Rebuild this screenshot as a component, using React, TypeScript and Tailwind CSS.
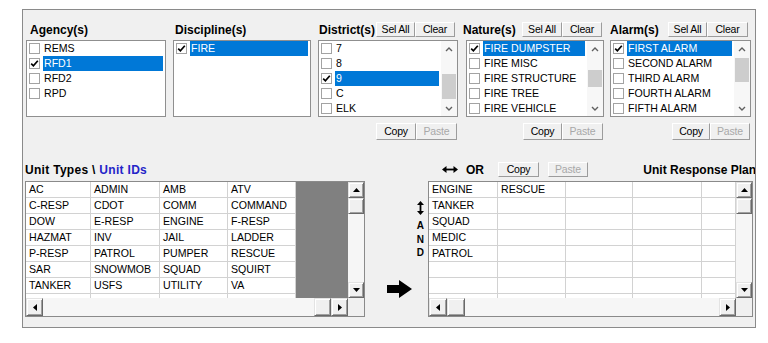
import React from 'react';

// ── small drawings ────────────────────────────

const Tick = () => (
  <svg width="9" height="9" viewBox="0 0 9 9" fill="none">
    <path d="M1.2 4.6L3.4 6.8L7.8 1.8" stroke="#000" strokeWidth="1.7" />
  </svg>
);

const ChevUp = () => (
  <svg width="8" height="5" viewBox="0 0 8 5" fill="none">
    <path d="M1 4L4 1L7 4" stroke="#606060" strokeWidth="1.4" />
  </svg>
);
const ChevDown = () => (
  <svg width="8" height="5" viewBox="0 0 8 5" fill="none">
    <path d="M1 1L4 4L7 1" stroke="#606060" strokeWidth="1.4" />
  </svg>
);

const TriUp = () => (
  <svg width="7" height="4" viewBox="0 0 7 4"><path d="M0 4L3.5 0L7 4Z" fill="#000" /></svg>
);
const TriDown = () => (
  <svg width="7" height="4" viewBox="0 0 7 4"><path d="M0 0L3.5 4L7 0Z" fill="#000" /></svg>
);
const TriLeft = () => (
  <svg width="4" height="7" viewBox="0 0 4 7"><path d="M4 0L0 3.5L4 7Z" fill="#000" /></svg>
);
const TriRight = () => (
  <svg width="4" height="7" viewBox="0 0 4 7"><path d="M0 0L4 3.5L0 7Z" fill="#000" /></svg>
);

const BigArrow = () => (
  <svg width="25" height="18" viewBox="0 0 25 18">
    <path d="M0 5H12V0L25 9L12 18V13H0Z" fill="#000" />
  </svg>
);

const ArrowUpDown = () => (
  <svg width="7" height="14" viewBox="0 0 7 14">
    <path d="M3.5 0L7 4H0Z M3.5 14L7 10H0Z" fill="#000" />
    <rect x="2.6" y="3" width="1.8" height="8" fill="#000" />
  </svg>
);

const ArrowLeftRight = () => (
  <svg width="16" height="7" viewBox="0 0 16 7">
    <path d="M0 3.5L4.5 0V7Z M16 3.5L11.5 0V7Z" fill="#000" />
    <rect x="4" y="2.6" width="8" height="1.8" fill="#000" />
  </svg>
);

// ── check list box ────────────────────────────

interface ListProps {
  items: string[];
  sel: number;
  className: string;
  thumb?: [number, number];
}

const CheckList: React.FC<ListProps> = ({ items, sel, className, thumb }) => (
  <div className={`h-[77px] border border-[#8f8f8f] bg-white flex ${className}`}>
    <div className="flex-1 flex flex-col min-w-0">
      {items.map((it, i) => (
        <div key={it} className="h-[15px] flex items-center pl-[2px]">
          <span className="w-[11px] h-[11px] border border-[#a3a3a3] bg-white flex items-center justify-center shrink-0">
            {i === sel && <Tick />}
          </span>
          <span
            className={
              i === sel
                ? 'ml-[3px] flex-1 h-full bg-[#0078d7] text-white pl-[1px] leading-[15px] whitespace-nowrap mr-[2px]'
                : 'ml-[3px] flex-1 h-full pl-[1px] leading-[15px] whitespace-nowrap'
            }
          >
            {it}
          </span>
        </div>
      ))}
    </div>
    {thumb && (
      <div className="w-[16px] flex flex-col bg-[#f7f7f7]">
        <div className="h-[16px] flex items-center justify-center"><ChevUp /></div>
        <div className="flex-1 flex flex-col">
          <div style={{ height: thumb[0] }} />
          <div className="bg-[#cdcdcd] mx-[1px]" style={{ height: thumb[1] }} />
        </div>
        <div className="h-[16px] flex items-center justify-center"><ChevDown /></div>
      </div>
    )}
  </div>
);

// ── buttons ───────────────────────────────────

const Btn: React.FC<{ label: string; className: string; off?: boolean }> = ({ label, className, off }) => (
  <div
    className={`border border-t-white border-l-white border-r-[#9c9c9c] border-b-[#9c9c9c] bg-[#f0f0f0] text-[10.5px] tracking-[-0.2px] flex items-center justify-center leading-none ${
      off ? 'text-[#a8a8a8]' : 'text-black'
    } ${className}`}
  >
    {label}
  </div>
);

const ClassicBtn: React.FC<{ className: string; children?: React.ReactNode }> = ({ className, children }) => (
  <div
    className={`bg-[#f0f0f0] border border-t-[#e3e3e3] border-l-[#e3e3e3] border-r-[#696969] border-b-[#696969] shadow-[inset_1px_1px_0_#ffffff,inset_-1px_-1px_0_#a0a0a0] flex items-center justify-center shrink-0 ${className}`}
  >
    {children}
  </div>
);

// ── data ──────────────────────────────────────

const UNIT_TYPES = [
  ['AC', 'ADMIN', 'AMB', 'ATV'],
  ['C-RESP', 'CDOT', 'COMM', 'COMMAND'],
  ['DOW', 'E-RESP', 'ENGINE', 'F-RESP'],
  ['HAZMAT', 'INV', 'JAIL', 'LADDER'],
  ['P-RESP', 'PATROL', 'PUMPER', 'RESCUE'],
  ['SAR', 'SNOWMOB', 'SQUAD', 'SQUIRT'],
  ['TANKER', 'USFS', 'UTILITY', 'VA'],
  ['', '', '', ''],
];

const PLAN = [
  ['ENGINE', 'RESCUE', '', '', ''],
  ['TANKER', '', '', '', ''],
  ['SQUAD', '', '', '', ''],
  ['MEDIC', '', '', '', ''],
  ['PATROL', '', '', '', ''],
  ['', '', '', '', ''],
  ['', '', '', '', ''],
  ['', '', '', '', ''],
];

const LEFT_COLS = ['w-[65px]', 'w-[69px]', 'w-[68px]', 'w-[68px]'];
const RIGHT_COLS = ['w-[69px]', 'w-[68px]', 'w-[67px]', 'w-[69px]', 'w-[34px]'];

const VScroll = () => (
  <div className="w-[16px] flex flex-col bg-[#f6f6f6]">
    <ClassicBtn className="h-[16px] w-[16px]"><TriUp /></ClassicBtn>
    <ClassicBtn className="h-[16px] w-[16px]" />
    <div className="flex-1" />
    <ClassicBtn className="h-[16px] w-[16px]"><TriDown /></ClassicBtn>
  </div>
);

const Cells: React.FC<{ rows: string[][]; cols: string[] }> = ({ rows, cols }) => (
  <div className="flex flex-col overflow-hidden">
    {rows.map((r, i) => (
      <div key={i} className="flex h-[16px] shrink-0 border-b border-[#d2d2d2]">
        {r.map((c, j) => (
          <div
            key={j}
            className={`${cols[j]} h-full shrink-0 border-r border-[#d2d2d2] pl-[3px] leading-[15px] whitespace-nowrap overflow-hidden`}
          >
            {c}
          </div>
        ))}
      </div>
    ))}
  </div>
);

// ── page ──────────────────────────────────────

export default function App() {
  return (
    <div className="w-[768px] h-[343px] bg-white pl-[22px] pt-[9px] font-['Liberation_Sans',Arial,sans-serif] text-black text-[10.6px]">
      <div className="w-[734px] h-[319px] border border-[#8a8a8a] bg-[#f0f0f0] flex flex-col overflow-hidden">

        {/* ── top: filter lists ── */}
        <div className="flex pl-[3px] pt-[12px] gap-[7px]">
          {/* Agency */}
          <div className="w-[140px] flex flex-col">
            <div className="h-[15px] flex items-center pl-[4px] font-bold text-[12px]">Agency(s)</div>
            <CheckList className="mt-[3px]" items={['REMS', 'RFD1', 'RFD2', 'RPD']} sel={1} />
          </div>

          {/* Discipline */}
          <div className="w-[138px] flex flex-col">
            <div className="h-[15px] flex items-center pl-[2px] font-bold text-[12px]">Discipline(s)</div>
            <CheckList className="mt-[3px]" items={['FIRE']} sel={0} />
          </div>

          {/* District */}
          <div className="w-[140px] flex flex-col">
            <div className="h-[15px] flex items-center pl-[1px]">
              <span className="font-bold text-[12px]">District(s)</span>
              <div className="ml-auto mr-[3px] flex">
                <Btn label="Sel All" className="w-[39px] h-[15px]" />
                <Btn label="Clear" className="w-[40px] h-[15px]" />
              </div>
            </div>
            <CheckList className="mt-[3px]" items={['7', '8', '9', 'C', 'ELK']} sel={2} thumb={[17, 25]} />
            <div className="mt-[6px] h-[17px] flex justify-end mr-[1px]">
              <Btn label="Copy" className="w-[40px] h-[17px]" />
              <Btn label="Paste" off className="w-[41px] h-[17px]" />
            </div>
          </div>

          {/* Nature */}
          <div className="w-[138px] flex flex-col ml-[1px]">
            <div className="h-[15px] flex items-center -ml-[3px]">
              <span className="font-bold text-[12px]">Nature(s)</span>
              <div className="ml-auto mr-[2px] flex">
                <Btn label="Sel All" className="w-[40px] h-[15px]" />
                <Btn label="Clear" className="w-[40px] h-[15px]" />
              </div>
            </div>
            <CheckList
              className="mt-[3px]"
              items={['FIRE DUMPSTER', 'FIRE MISC', 'FIRE STRUCTURE', 'FIRE TREE', 'FIRE VEHICLE']}
              sel={0}
              thumb={[13, 17]}
            />
            <div className="mt-[6px] h-[17px] flex justify-end mr-[1px]">
              <Btn label="Copy" className="w-[39px] h-[17px]" />
              <Btn label="Paste" off className="w-[41px] h-[17px]" />
            </div>
          </div>

          {/* Alarm */}
          <div className="w-[141px] flex flex-col -ml-[1px]">
            <div className="h-[15px] flex items-center">
              <span className="font-bold text-[12px]">Alarm(s)</span>
              <div className="ml-auto mr-[3px] flex">
                <Btn label="Sel All" className="w-[39px] h-[15px]" />
                <Btn label="Clear" className="w-[41px] h-[15px]" />
              </div>
            </div>
            <CheckList
              className="mt-[3px]"
              items={['FIRST ALARM', 'SECOND ALARM', 'THIRD ALARM', 'FOURTH ALARM', 'FIFTH ALARM']}
              sel={0}
              thumb={[1, 24]}
            />
            <div className="mt-[6px] h-[17px] flex justify-end mr-[1px]">
              <Btn label="Copy" className="w-[38px] h-[17px]" />
              <Btn label="Paste" off className="w-[40px] h-[17px]" />
            </div>
          </div>
        </div>

        {/* ── bottom: unit types → response plan ── */}
        <div className="flex pl-[2px] mt-[22px]">
          {/* Unit types grid */}
          <div className="w-[340px] flex flex-col">
            <div className="h-[15px] flex items-center font-bold text-[12px] tracking-[0.3px]">
              Unit Types \&nbsp;<span className="text-[#2424c8]">Unit IDs</span>
            </div>
            <div className="mt-[4px] h-[136px] border border-[#8a8a8a] bg-white flex flex-col">
              <div className="flex h-[116px]">
                <div className="w-[270px] h-full overflow-hidden">
                  <Cells rows={UNIT_TYPES} cols={LEFT_COLS} />
                </div>
                <div className="w-[52px] h-full bg-[#808080]" />
                <VScroll />
              </div>
              <div className="flex h-[18px]">
                <div className="w-[322px] flex bg-[#f6f6f6]">
                  <ClassicBtn className="w-[17px] h-[18px]"><TriLeft /></ClassicBtn>
                  <div className="flex-1" />
                  <ClassicBtn className="w-[17px] h-[18px]" />
                  <ClassicBtn className="w-[17px] h-[18px]"><TriRight /></ClassicBtn>
                </div>
                <div className="w-[16px] bg-[#f0f0f0]" />
              </div>
            </div>
          </div>

          {/* middle: AND + arrow */}
          <div className="w-[63px] flex">
            <div className="pl-[22px] pt-[118px]">
              <BigArrow />
            </div>
            <div className="ml-auto mr-[4px] pt-[39px] flex flex-col items-center">
              <ArrowUpDown />
              <div className="mt-[4px] flex flex-col items-center font-bold text-[10px] leading-[13.5px]">
                <span>A</span>
                <span>N</span>
                <span>D</span>
              </div>
            </div>
          </div>

          {/* Response plan grid */}
          <div className="w-[325px] flex flex-col">
            <div className="h-[15px] flex items-center">
              <div className="ml-[14px] flex items-center">
                <ArrowLeftRight />
                <span className="ml-[8px] font-bold text-[12px]">OR</span>
              </div>
              <Btn label="Copy" className="ml-[14px] w-[41px] h-[15px]" />
              <Btn label="Paste" off className="ml-[9px] w-[40px] h-[15px]" />
              <span className="ml-auto -mr-[3px] font-bold text-[12px] whitespace-nowrap">Unit Response Plan</span>
            </div>
            <div className="mt-[4px] h-[136px] border border-[#8a8a8a] bg-white flex flex-col">
              <div className="flex h-[116px]">
                <div className="w-[307px] h-full overflow-hidden">
                  <Cells rows={PLAN} cols={RIGHT_COLS} />
                </div>
                <VScroll />
              </div>
              <div className="flex h-[18px]">
                <div className="w-[307px] flex bg-[#f6f6f6]">
                  <ClassicBtn className="w-[18px] h-[18px]"><TriLeft /></ClassicBtn>
                  <ClassicBtn className="w-[18px] h-[18px]" />
                  <div className="flex-1" />
                  <ClassicBtn className="w-[17px] h-[18px]"><TriRight /></ClassicBtn>
                </div>
                <div className="w-[16px] bg-[#f0f0f0]" />
              </div>
            </div>
          </div>
        </div>
      </div>
    </div>
  );
}
